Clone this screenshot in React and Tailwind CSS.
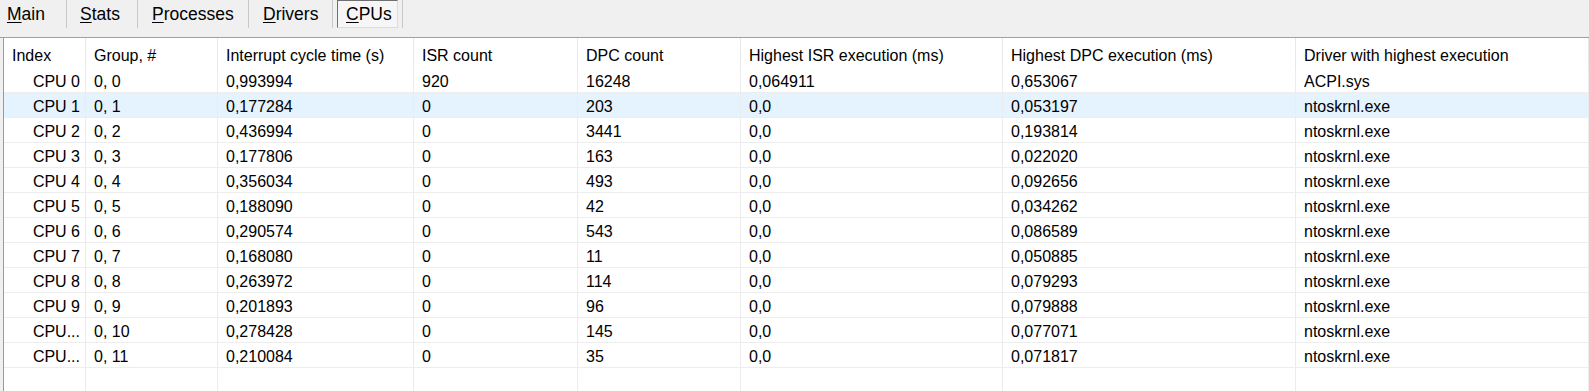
import React from 'react';

const rows = [
  ['CPU 0', '0, 0', '0,993994', '920', '16248', '0,064911', '0,653067', 'ACPI.sys'],
  ['CPU 1', '0, 1', '0,177284', '0', '203', '0,0', '0,053197', 'ntoskrnl.exe'],
  ['CPU 2', '0, 2', '0,436994', '0', '3441', '0,0', '0,193814', 'ntoskrnl.exe'],
  ['CPU 3', '0, 3', '0,177806', '0', '163', '0,0', '0,022020', 'ntoskrnl.exe'],
  ['CPU 4', '0, 4', '0,356034', '0', '493', '0,0', '0,092656', 'ntoskrnl.exe'],
  ['CPU 5', '0, 5', '0,188090', '0', '42', '0,0', '0,034262', 'ntoskrnl.exe'],
  ['CPU 6', '0, 6', '0,290574', '0', '543', '0,0', '0,086589', 'ntoskrnl.exe'],
  ['CPU 7', '0, 7', '0,168080', '0', '11', '0,0', '0,050885', 'ntoskrnl.exe'],
  ['CPU 8', '0, 8', '0,263972', '0', '114', '0,0', '0,079293', 'ntoskrnl.exe'],
  ['CPU 9', '0, 9', '0,201893', '0', '96', '0,0', '0,079888', 'ntoskrnl.exe'],
  ['CPU...', '0, 10', '0,278428', '0', '145', '0,0', '0,077071', 'ntoskrnl.exe'],
  ['CPU...', '0, 11', '0,210084', '0', '35', '0,0', '0,071817', 'ntoskrnl.exe'],
];

const headers = [
  'Index',
  'Group, #',
  'Interrupt cycle time (s)',
  'ISR count',
  'DPC count',
  'Highest ISR execution (ms)',
  'Highest DPC execution (ms)',
  'Driver with highest execution',
];

// column template, separators land on the reference's column lines
const cols = 'grid grid-cols-[82px_132px_196px_164px_163px_262px_293px_1fr]';

function Tab({ first, rest, className }) {
  return (
    <div className={`h-[28px] flex items-center border-r border-[#c9c9c9] ${className}`}>
      <span>
        <u className="underline-offset-2">{first}</u>
        {rest}
      </span>
    </div>
  );
}

export default function App() {
  return (
    <div
      className="w-[1589px] h-[391px] overflow-hidden bg-[#f0f0f0] text-[16px] text-black flex flex-col"
      style={{ fontFamily: '"Liberation Sans", Arial, sans-serif' }}
    >
      {/* tab strip */}
      <div className="h-[38px] shrink-0 flex items-start border-b border-[#a0a0a0] text-[17.5px]">
        <Tab first="M" rest="ain" className="w-[67px] pl-[7px]" />
        <Tab first="S" rest="tats" className="w-[71px] pl-[13px]" />
        <Tab first="P" rest="rocesses" className="w-[111px] pl-[14px]" />
        <Tab first="D" rest="rivers" className="w-[84px] pl-[14px]" />
        <div className="w-[70px] h-[28px] pl-[4px] border-r border-[#c9c9c9]">
          <div className="w-[61px] h-[28px] pl-[8px] flex items-center bg-[#f6f6f6] border border-t-[#6f6f6f] border-l-[#6f6f6f] border-r-[#dcdcdc] border-b-[#dcdcdc]">
            <span>
              <u className="underline-offset-2">C</u>PUs
            </span>
          </div>
        </div>
      </div>

      {/* list view */}
      <div className="flex-1 ml-[3px] border-l border-[#9a9a9a] bg-white flex flex-col">
        <div className={`${cols} h-[30px] shrink-0`}>
          {headers.map((h) => (
            <div key={h} className="border-r border-[#e8e8e8] pl-[8px] pt-[9px] leading-[18px] whitespace-nowrap overflow-hidden">
              {h}
            </div>
          ))}
        </div>
        {rows.map((r, i) => (
          <div
            key={i}
            className={`${cols} h-[25px] shrink-0 border-b border-[#ededed] ${i === 1 ? 'bg-[#e5f3ff]' : ''}`}
          >
            {r.map((c, j) => (
              <div
                key={j}
                className={`border-r border-[#ececec] pt-[5px] leading-[18px] whitespace-nowrap overflow-hidden ${
                  j === 0 ? 'text-right pr-[5px]' : 'pl-[8px]'
                }`}
              >
                {c}
              </div>
            ))}
          </div>
        ))}
        <div className={`${cols} flex-1`}>
          {headers.map((h) => (
            <div key={h} className="border-r border-[#ececec]" />
          ))}
        </div>
      </div>
    </div>
  );
}
